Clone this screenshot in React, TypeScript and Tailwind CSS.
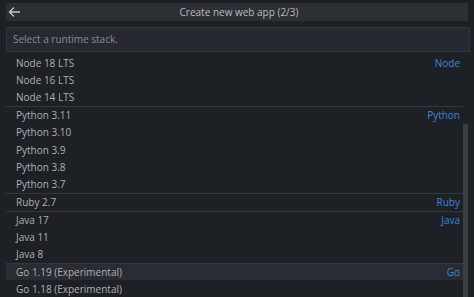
import React from "react";

type Row = { label: string; cat?: string; sep?: boolean; active?: boolean };

const rows: Row[] = [
  { label: "Node 18 LTS", cat: "Node" },
  { label: "Node 16 LTS" },
  { label: "Node 14 LTS" },
  { label: "Python 3.11", cat: "Python", sep: true },
  { label: "Python 3.10" },
  { label: "Python 3.9" },
  { label: "Python 3.8" },
  { label: "Python 3.7" },
  { label: "Ruby 2.7", cat: "Ruby", sep: true },
  { label: "Java 17", cat: "Java", sep: true },
  { label: "Java 11" },
  { label: "Java 8" },
  { label: "Go 1.19 (Experimental)", cat: "Go", sep: true, active: true },
  { label: "Go 1.18 (Experimental)" },
];

export default function App() {
  return (
    <div
      className="w-[474px] h-[297px] overflow-hidden bg-[#1d2025] flex flex-col pt-[3px] px-[6px] text-[10px] text-[#adb0b5]"
      style={{ fontFamily: '"Open Sans", "Noto Sans", sans-serif' }}
    >
      <div className="h-[18px] bg-[#2c2f34] flex items-center relative shrink-0">
        <svg className="absolute left-[2px] top-[3px]" width="13" height="12" viewBox="0 0 13 12" fill="none">
          <path d="M12 6H2M6 1.5L1.5 6L6 10.5" stroke="#c4c7cc" strokeWidth="1.3" />
        </svg>
        <div className="flex-1 text-center text-[#b8bbc0] pl-[4px]">Create new web app (2/3)</div>
      </div>
      <div className="h-[6px] shrink-0" />
      <div className="h-[25px] shrink-0 bg-[#262a30] border border-[#33373d] flex items-center pl-[6px] text-[#878b90] mr-[-2px]">
        Select a runtime stack.
      </div>
      <div className="flex shrink-0 mt-[2px]">
        <div className="flex-1 flex flex-col">
          {rows.map((r, i) => (
            <div
              key={i}
              className={`h-[17.4px] flex items-center justify-between pl-[10px] pr-[3px] ${
                r.sep ? "border-t border-[#33373c]" : ""
              } ${r.active ? "bg-[#292d33]" : ""}`}
            >
              <span className="leading-none">{r.label}</span>
              {r.cat && <span className="leading-none text-[#3d86d9]">{r.cat}</span>}
            </div>
          ))}
        </div>
        <div className="w-[5px] flex flex-col">
          <div className="h-[70px]" />
          <div className="flex-1 bg-[#3a3d42]" />
        </div>
      </div>
    </div>
  );
}
